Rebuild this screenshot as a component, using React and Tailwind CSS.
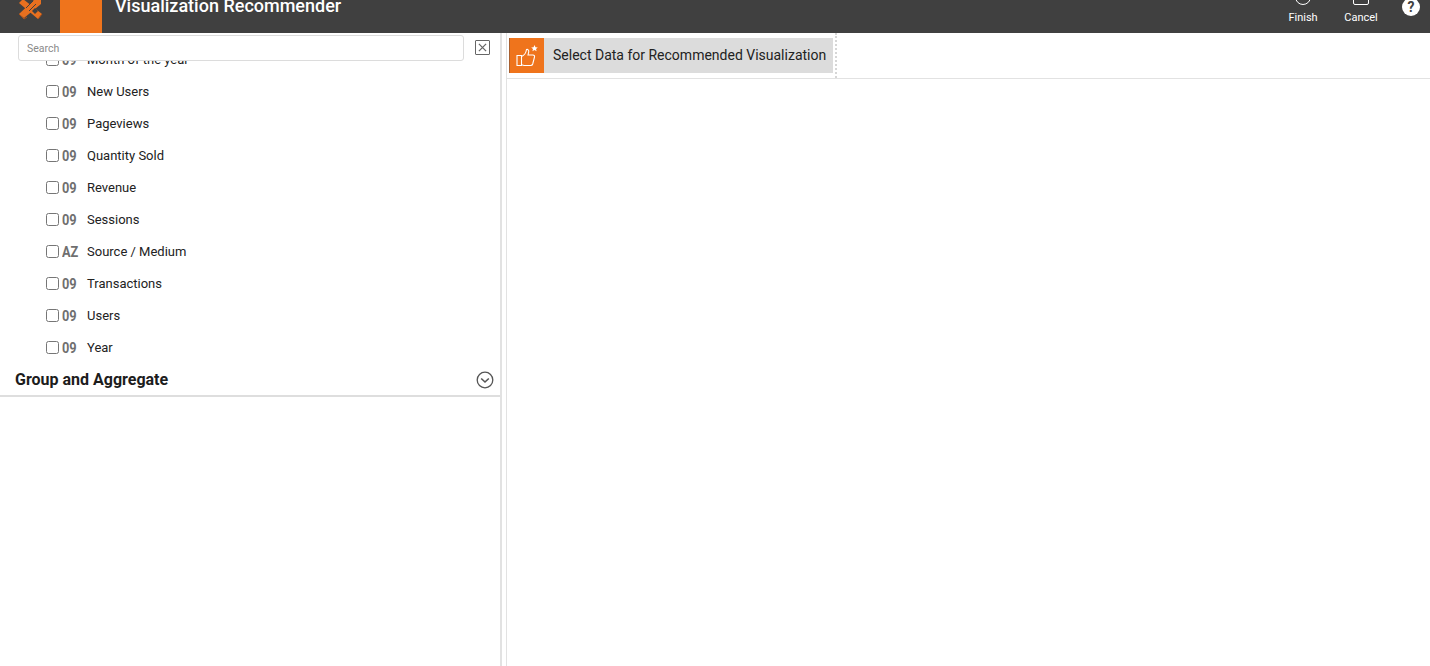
import React from 'react';

const fields = [
  ['09', 'New Users'],
  ['09', 'Pageviews'],
  ['09', 'Quantity Sold'],
  ['09', 'Revenue'],
  ['09', 'Sessions'],
  ['AZ', 'Source / Medium'],
  ['09', 'Transactions'],
  ['09', 'Users'],
  ['09', 'Year'],
];

function FieldRow({ type, label }) {
  return (
    <div className="flex h-8 items-center pl-[46px]">
      <span className="h-[13px] w-[13px] rounded-[2.5px] border border-[#767676] bg-white" />
      <span className="ml-[3px] w-[25px] origin-left scale-x-[0.85] pt-[2px] text-[15px] font-bold leading-none text-[#6f6f6f]">{type}</span>
      <span className="pt-[1px] text-[13px] text-[#222]">{label}</span>
    </div>
  );
}

function Logo() {
  return (
    <svg width="26" height="22" viewBox="0 0 26 22" fill="none" className="-mt-[1px]">
      <path d="M2 4l4-4 19 15-4 5z" fill="#e8701f" />
      <path d="M7 19l-5-4L18 0l6 0 0 5z" fill="#e8701f" />
      <path d="M9 9l7-7M12 12l7-7" stroke="#404040" strokeWidth="1" />
      <path d="M15 12l3-3 3 3-3 3z" fill="#404040" />
      <path d="M2 15l5 5 3-2M21 20l4-5" stroke="#a9501a" strokeWidth="1" />
    </svg>
  );
}

function ThumbIcon() {
  return (
    <svg width="24" height="24" viewBox="0 0 24 24" fill="none" stroke="#fff" strokeWidth="1.1">
      <path d="M2 11.5h4.5v10H2z" />
      <path d="M6.5 12.5c2.5-1 4.5-3.5 5-7 1.5-.5 2.5 1 2.2 2.5l-.7 3h5c1.2 0 1.8 1 1.5 2l-1.8 7c-.3 1-1 1.5-2 1.5H9c-1 0-1.5-.5-2.5-.8" />
      <path d="M19.5 1l1 2.2 2.3.2-1.8 1.5.6 2.3-2.1-1.2-2.1 1.2.6-2.3-1.8-1.5 2.3-.2z" fill="#fff" stroke="none" />
    </svg>
  );
}

export default function App() {
  return (
    <div className="flex h-[666px] w-[1430px] flex-col overflow-hidden bg-white font-['Roboto',sans-serif]">
      <header className="flex h-[33px] shrink-0 overflow-hidden bg-[#404040] text-white">
        <div className="flex w-[60px] justify-center">
          <Logo />
        </div>
        <div className="h-full w-[42px] bg-[#ef741c]" />
        <h1 className="-mt-[6px] ml-[13px] text-[18px] font-medium leading-6">Visualization Recommender</h1>
        <div className="ml-auto flex items-start">
          <div className="flex w-[58px] flex-col items-center">
            <span className="-mt-[11px] h-4 w-4 rounded-full border-[1.5px] border-white" />
            <span className="mt-[6px] text-[11px] leading-[13px]">Finish</span>
          </div>
          <div className="flex w-[58px] flex-col items-center">
            <span className="-mt-[11px] h-4 w-4 rounded-[2px] border-[1.5px] border-white" />
            <span className="mt-[6px] text-[11px] leading-[13px]">Cancel</span>
          </div>
          <div className="-mt-[2px] flex w-[40px] justify-center pl-[2px]">
            <span className="flex h-[18px] w-[18px] items-center justify-center rounded-full bg-white text-[14px] font-bold leading-none text-[#404040]">?</span>
          </div>
        </div>
      </header>

      <div className="flex min-h-0 flex-1">
        <aside className="flex w-[502px] shrink-0 flex-col border-r-2 border-[#e2e2e2]">
          <div className="flex h-[28px] shrink-0 items-end pl-[18px]">
            <div className="flex h-[26px] w-[446px] items-center rounded-[3px] border border-[#dcdcdc] bg-white pl-2 pt-[2px] text-[10.5px] text-[#8a8a8a]">
              Search
            </div>
            <span className="mb-[6px] ml-[11px] flex h-[15px] w-[15px] items-center justify-center rounded-[1px] border-[1.5px] border-[#666]">
              <svg width="9" height="9" viewBox="0 0 10 10" stroke="#666" strokeWidth="1.4"><path d="M1 1l8 8M9 1l-8 8" /></svg>
            </span>
          </div>
          <div className="h-[14px] shrink-0 overflow-hidden">
            <div className="-mt-[18px]">
              <FieldRow type="09" label="Month of the year" />
            </div>
          </div>
          {fields.map(([type, label]) => (
            <FieldRow key={label} type={type} label={label} />
          ))}
          <div className="flex h-[34px] items-center justify-between border-b-2 border-[#dedede] pl-[15px] pr-[6px] pt-[2px]">
            <span className="text-[16px] font-bold text-[#1c1c1c]">Group and Aggregate</span>
            <svg width="18" height="18" viewBox="0 0 18 18" fill="none" stroke="#555" strokeWidth="1.3">
              <circle cx="9" cy="9" r="7.8" />
              <path d="M5.2 7.5L9 11l3.8-3.5" strokeWidth="1.6" />
            </svg>
          </div>
        </aside>

        <main className="ml-[4px] flex min-w-0 flex-1 flex-col border-l border-[#e2e2e2]">
          <div className="flex h-[46px] shrink-0 items-center border-b border-[#e2e2e2] pl-[2px]">
            <div className="flex h-[35px] w-[324px] items-center bg-[#dcdcdc]">
              <span className="flex h-[35px] w-[35px] shrink-0 items-center justify-center border-l border-[#a86030] bg-[#ef741c]">
                <ThumbIcon />
              </span>
              <span className="ml-[9px] whitespace-nowrap text-[14px] text-[#222]">Select Data for Recommended Visualization</span>
            </div>
            <div className="ml-[2px] h-full border-l-2 border-dotted border-[#d6d6d6]" />
          </div>
        </main>
      </div>
    </div>
  );
}
